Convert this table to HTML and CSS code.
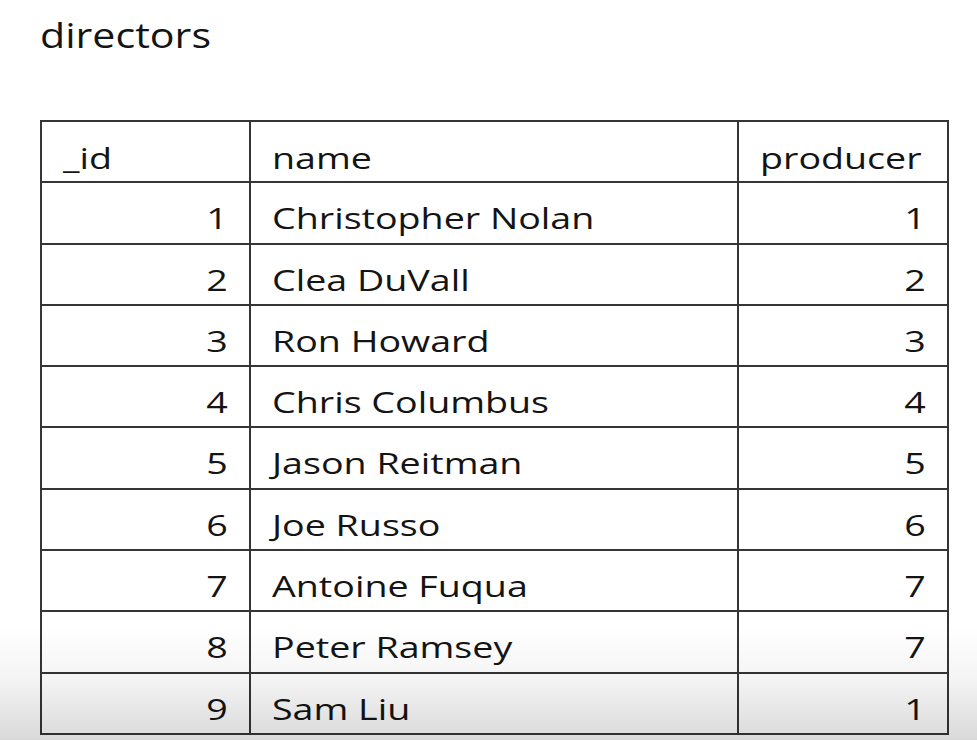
FILE: index.html
```html
<!DOCTYPE html>
<html>
<head>
<meta charset="utf-8">
<link rel="stylesheet" href="styles.css">
</head>
<body>
<div class="page">
  <h1 class="title"><span class="t tl">directors</span></h1>
  <table class="grid">
    <colgroup><col class="c-id"><col class="c-name"><col class="c-prod"></colgroup>
    <thead>
      <tr><th class="l"><span class="t tl">_id</span></th><th class="l"><span class="t tl">name</span></th><th class="l"><span class="t tl">producer</span></th></tr>
    </thead>
    <tbody>
      <tr><td class="r"><span class="t tr">1</span></td><td class="l"><span class="t tl">Christopher Nolan</span></td><td class="r"><span class="t tr">1</span></td></tr>
      <tr><td class="r"><span class="t tr">2</span></td><td class="l"><span class="t tl">Clea DuVall</span></td><td class="r"><span class="t tr">2</span></td></tr>
      <tr><td class="r"><span class="t tr">3</span></td><td class="l"><span class="t tl">Ron Howard</span></td><td class="r"><span class="t tr">3</span></td></tr>
      <tr><td class="r"><span class="t tr">4</span></td><td class="l"><span class="t tl">Chris Columbus</span></td><td class="r"><span class="t tr">4</span></td></tr>
      <tr><td class="r"><span class="t tr">5</span></td><td class="l"><span class="t tl">Jason Reitman</span></td><td class="r"><span class="t tr">5</span></td></tr>
      <tr><td class="r"><span class="t tr">6</span></td><td class="l"><span class="t tl">Joe Russo</span></td><td class="r"><span class="t tr">6</span></td></tr>
      <tr><td class="r"><span class="t tr">7</span></td><td class="l"><span class="t tl">Antoine Fuqua</span></td><td class="r"><span class="t tr">7</span></td></tr>
      <tr><td class="r"><span class="t tr">8</span></td><td class="l"><span class="t tl">Peter Ramsey</span></td><td class="r"><span class="t tr">7</span></td></tr>
      <tr><td class="r"><span class="t tr">9</span></td><td class="l"><span class="t tl">Sam Liu</span></td><td class="r"><span class="t tr">1</span></td></tr>
    </tbody>
  </table>
  <div class="shade"></div>
</div>
</body>
</html>
```
FILE: styles.css
```css
html, body {
  margin: 0;
  padding: 0;
  background: #ffffff;
}
.page {
  position: relative;
  width: 977px;
  height: 740px;
  overflow: hidden;
  font-family: "Open Sans", Lato, sans-serif;
  color: #141414;
}
.t {
  display: inline-block;
  transform: scaleX(1.275);
}
.tl { transform-origin: left center; }
.tr { transform-origin: right center; }
.title {
  margin: 0;
  padding: 13px 0 0 40px;
  height: 120px;
  box-sizing: border-box;
  font-weight: 500;
  font-size: 34px;
  line-height: 1.3;
}
.title .t { transform: scaleX(1.21); }
.grid {
  margin-left: 40px;
  border-collapse: collapse;
  width: 907px;
  table-layout: fixed;
}
.c-id { width: 209px; }
.c-name { width: 488px; }
.c-prod { width: 210px; }
.grid tr { height: 61.3px; }
.grid th, .grid td {
  border: 2px solid #353535;
  box-sizing: border-box;
  padding: 20px 21px 0 21px;
  font-size: 29.5px;
  font-weight: 500;
  line-height: 1;
  vertical-align: top;
}
.grid th { padding-top: 21px; }
.l { text-align: left; }
.r { text-align: right; }
.shade {
  position: absolute;
  left: 0;
  right: 0;
  bottom: 0;
  height: 115px;
  background: linear-gradient(to bottom, rgba(0,0,0,0) 0%, rgba(0,0,0,0.04) 45%, rgba(0,0,0,0.15) 100%);
  pointer-events: none;
}
```
